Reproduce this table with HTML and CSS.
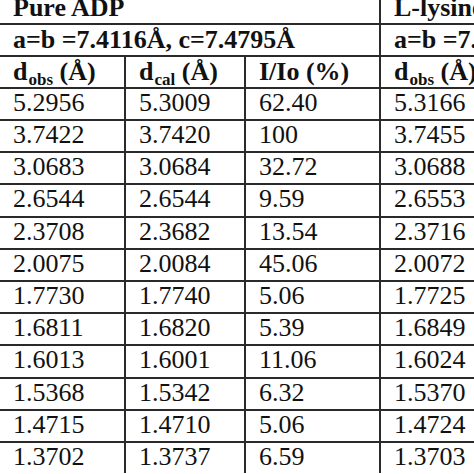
FILE: index.html
```html
<!DOCTYPE html>
<html lang="en">
<head>
<meta charset="utf-8">
<title>XRD data</title>
<link rel="stylesheet" href="styles.css">
</head>
<body>
<div class="viewport">
  <div class="sheet">
    <div class="cell head span3">Pure ADP</div>
    <div class="cell head">L-lysine doped ADP</div>

    <div class="cell head span3">a=b =7.4116Å, c=7.4795Å</div>
    <div class="cell head">a=b =7.4208Å, c=7.4826Å</div>

    <div class="cell head">d<sub>obs</sub> (Å)</div>
    <div class="cell head">d<sub>cal</sub> (Å)</div>
    <div class="cell head">I/Io (%)</div>
    <div class="cell head">d<sub>obs</sub> (Å)</div>

    <div class="cell">5.2956</div><div class="cell">5.3009</div><div class="cell">62.40</div><div class="cell">5.3166</div>
    <div class="cell">3.7422</div><div class="cell">3.7420</div><div class="cell">100</div><div class="cell">3.7455</div>
    <div class="cell">3.0683</div><div class="cell">3.0684</div><div class="cell">32.72</div><div class="cell">3.0688</div>
    <div class="cell">2.6544</div><div class="cell">2.6544</div><div class="cell">9.59</div><div class="cell">2.6553</div>
    <div class="cell">2.3708</div><div class="cell">2.3682</div><div class="cell">13.54</div><div class="cell">2.3716</div>
    <div class="cell">2.0075</div><div class="cell">2.0084</div><div class="cell">45.06</div><div class="cell">2.0072</div>
    <div class="cell">1.7730</div><div class="cell">1.7740</div><div class="cell">5.06</div><div class="cell">1.7725</div>
    <div class="cell">1.6811</div><div class="cell">1.6820</div><div class="cell">5.39</div><div class="cell">1.6849</div>
    <div class="cell">1.6013</div><div class="cell">1.6001</div><div class="cell">11.06</div><div class="cell">1.6024</div>
    <div class="cell">1.5368</div><div class="cell">1.5342</div><div class="cell">6.32</div><div class="cell">1.5370</div>
    <div class="cell">1.4715</div><div class="cell">1.4710</div><div class="cell">5.06</div><div class="cell">1.4724</div>
    <div class="cell">1.3702</div><div class="cell">1.3737</div><div class="cell">6.59</div><div class="cell">1.3703</div>
  </div>
</div>
</body>
</html>
```

FILE: styles.css
```css
html, body {
  margin: 0;
  padding: 0;
  background: #ffffff;
}

.viewport {
  width: 474px;
  height: 474px;
  overflow: hidden;
}

.sheet {
  display: grid;
  grid-template-columns: 124px 118px 133px 130px;
  grid-auto-rows: 30.2px;
  gap: 2px;
  background: #2a2a2a;
  margin-top: -7.7px;
  width: max-content;
  font-family: "Liberation Serif", "Times New Roman", serif;
  font-size: 26px;
  color: #111111;
}

.cell {
  background: #ffffff;
  padding-left: 13px;
  line-height: 28px;
  white-space: nowrap;
  overflow: hidden;
}

.head {
  font-weight: bold;
  padding-top: 1.8px;
}

.span3 {
  grid-column: span 3;
}

sub {
  font-size: 17px;
  line-height: 0;
  vertical-align: -5px;
  margin-left: 1px;
}
```
